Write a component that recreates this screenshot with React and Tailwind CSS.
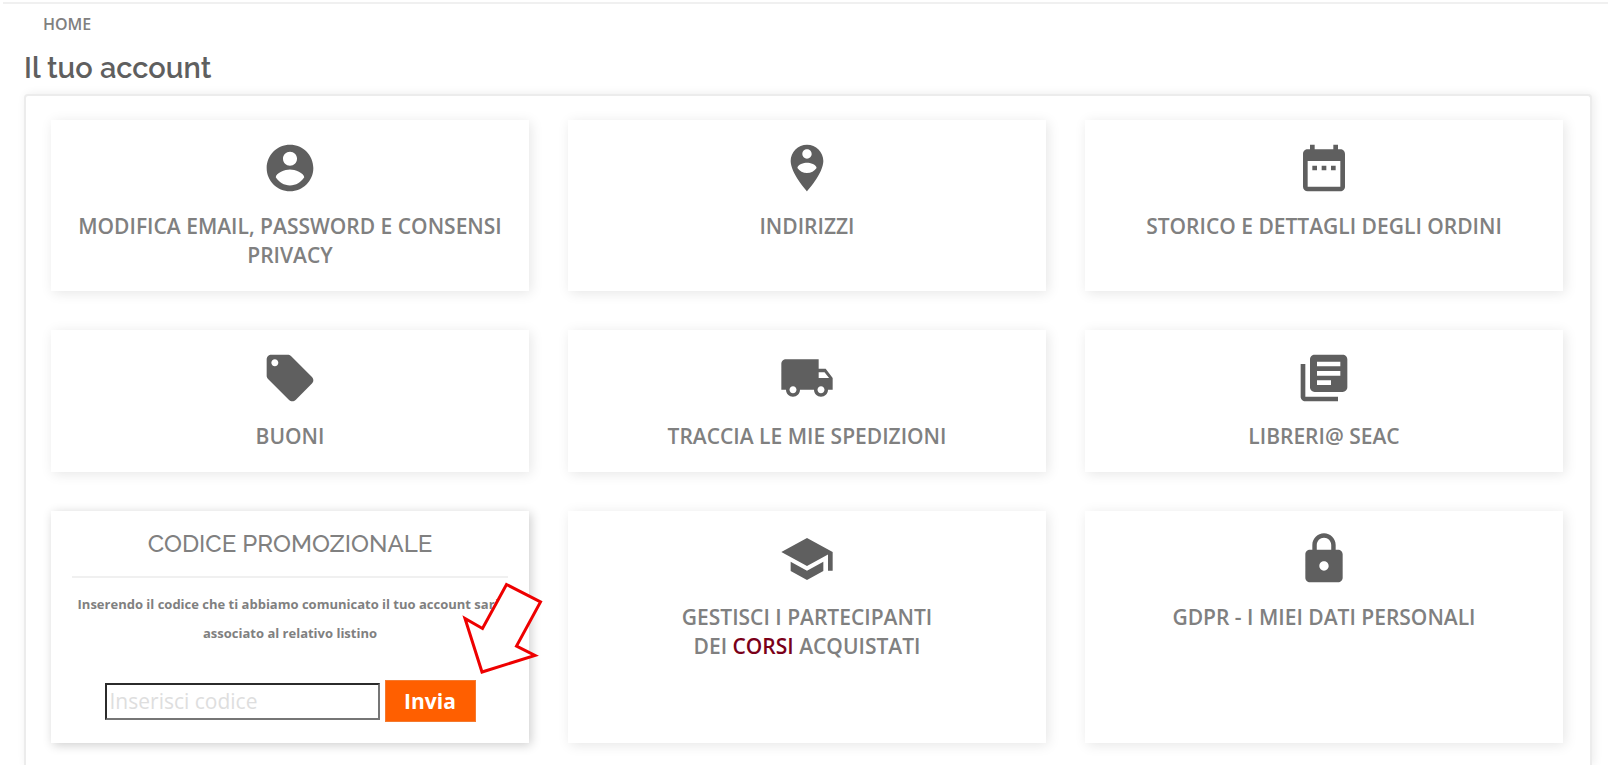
import { useState } from "react";
import {
  MdDateRange,
  MdLocalOffer,
  MdLocalShipping,
  MdLock,
  MdSchool,
} from "react-icons/md";

function AccountIcon({ className }) {
  return (
    <svg viewBox="0 0 24 24" fill="currentColor" aria-hidden="true" className={className}>
      <path d="M12 2C6.48 2 2 6.48 2 12s4.48 10 10 10 10-4.48 10-10S17.52 2 12 2zm0 3c1.66 0 3 1.34 3 3s-1.34 3-3 3-3-1.34-3-3 1.34-3 3-3zm0 14.5c-2.5 0-4.8-1.4-6.1-3.5.03-1.99 4-3.4 6.1-3.4s6.07 1.41 6.1 3.4c-1.3 2.1-3.6 3.5-6.1 3.5z" />
    </svg>
  );
}

function AddressIcon({ className }) {
  return (
    <svg viewBox="0 0 24 24" fill="currentColor" aria-hidden="true" className={className}>
      <path d="M12 2C8.14 2 5 5.14 5 9c0 5.25 7 13 7 13s7-7.75 7-13c0-3.86-3.14-7-7-7zm0 2c1.1 0 2 .9 2 2s-.9 2-2 2-2-.9-2-2 .9-2 2-2zm0 10.1c-1.67 0-3.24-.85-4.1-2.15.02-1.32 2.77-2.15 4.1-2.15s4.08.83 4.1 2.15c-.86 1.3-2.43 2.15-4.1 2.15z" />
    </svg>
  );
}

function LibraryIcon({ className }) {
  return (
    <svg viewBox="0 0 24 24" fill="currentColor" aria-hidden="true" className={className}>
      <path d="M4 6H2v14c0 1.1.9 2 2 2h14v-2H4V6zm16-4H8c-1.1 0-2 .9-2 2v12c0 1.1.9 2 2 2h12c1.1 0 2-.9 2-2V4c0-1.1-.9-2-2-2zm-1 9H9V9h10v2zm-4 4H9v-2h6v2zm4-8H9V5h10v2z" />
    </svg>
  );
}

const links = [
  { id: "identity", icon: AccountIcon, label: "Modifica email, password e consensi privacy" },
  { id: "addresses", icon: AddressIcon, label: "Indirizzi" },
  { id: "history", icon: MdDateRange, label: "Storico e dettagli degli ordini" },
  { id: "vouchers", icon: MdLocalOffer, label: "Buoni" },
  { id: "tracking", icon: MdLocalShipping, label: "Traccia le mie spedizioni" },
  { id: "library", icon: LibraryIcon, label: "Libreri@ Seac" },
];

function AccountLink({ id, icon: Icon, children }) {
  return (
    <a
      href={`#${id}`}
      className="flex flex-col items-center bg-white px-5 pt-5 pb-[21px] text-center text-[21px] leading-[29px] font-semibold text-[#808080] uppercase shadow-[2px_2px_12px_rgba(0,0,0,0.1)]"
    >
      <Icon className="mb-4 size-14 text-[#5f5f5f]" />
      <span>{children}</span>
    </a>
  );
}

function PromoCode() {
  const [code, setCode] = useState("");

  return (
    <form
      onSubmit={(e) => e.preventDefault()}
      className="relative bg-white px-[21px] pt-[18px] pb-[21px] text-center text-[#808080] shadow-[2px_2px_10px_rgba(0,0,0,0.2)]"
    >
      <h2 className="border-b-2 border-[#f0f0f0] pb-[17px] font-['Raleway','Lato',sans-serif] text-[24px] leading-[30px] font-medium uppercase">
        Codice promozionale
      </h2>
      <label htmlFor="code" className="mt-3 block text-[13px] leading-[29px] font-bold">
        Inserendo il codice che ti abbiamo comunicato il tuo account sarà
        associato al relativo listino
      </label>
      <div className="mt-8 flex items-center justify-center gap-[5px]">
        <input
          id="code"
          type="text"
          placeholder="Inserisci codice"
          value={code}
          onChange={(e) => setCode(e.target.value)}
          className="h-[37px] w-[275px] border-2 border-t-[#2b2b2b] border-r-[#767676] border-b-[#767676] border-l-[#2b2b2b] px-[3px] text-[21px] placeholder:text-[#dedede]"
        />
        <button
          type="submit"
          className="h-[42px] w-[91px] border border-[#f47a30] bg-[#ff5f00] text-[21px] leading-[29px] font-bold text-white"
        >
          Invia
        </button>
      </div>

      {/* arrow pointing at the submit button */}
      <svg
        viewBox="0 0 82 94"
        fill="white"
        stroke="#ee0000"
        strokeWidth="3"
        aria-hidden="true"
        className="pointer-events-none absolute -right-[15px] bottom-[68px] h-[94px] w-[82px]"
      >
        <path d="M44.5 3.5 78.5 21 54.5 65 73 74.5 20 91 3 37.5 20.5 47.5Z" />
      </svg>
    </form>
  );
}

export default function App() {
  return (
    <div className="overflow-hidden bg-white pt-[2px] font-['Open_Sans',sans-serif]">
      <hr className="ml-[3px] border-t-2 border-[#f0f0f0]" />
      <nav className="px-[43px] pt-2 text-[16px] leading-6 font-semibold text-[#808080]">
        <a href="#home">HOME</a>
      </nav>
      <h1 className="mt-[13px] mb-[7px] px-6 font-['Raleway','Lato',sans-serif] text-[29px] leading-[38px] font-semibold text-[#5f5f5f]">
        Il tuo account
      </h1>
      <main className="mr-4 ml-6 grid grid-cols-3 gap-[39px] rounded-t-[4px] border-2 border-b-0 border-[#ececec] bg-white pt-6 pr-[27px] pb-[22px] pl-[25px] shadow-[2px_0_10px_rgba(0,0,0,0.08)]">
        {links.map((link) => (
          <AccountLink key={link.id} id={link.id} icon={link.icon}>
            {link.label}
          </AccountLink>
        ))}
        <PromoCode />
        <AccountLink id="courses" icon={MdSchool}>
          Gestisci i partecipanti
          <br />
          dei <span className="text-[#7a0019]">corsi</span> acquistati
        </AccountLink>
        <AccountLink id="gdpr" icon={MdLock}>
          GDPR - I miei dati personali
        </AccountLink>
      </main>
    </div>
  );
}
